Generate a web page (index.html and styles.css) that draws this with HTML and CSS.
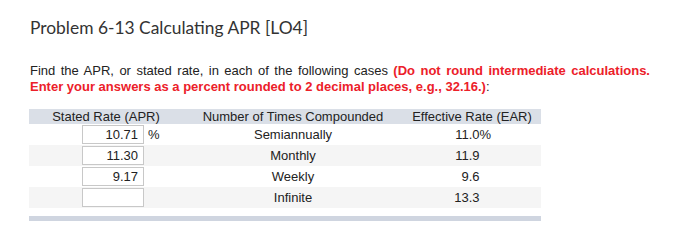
FILE: index.html
```html
<!DOCTYPE html>
<html>
<head>
<meta charset="utf-8">
<link rel="stylesheet" href="styles.css">
</head>
<body>
<div class="page">
  <h1 class="title">Problem 6-13 Calculating APR [LO4]</h1>
  <p class="intro">Find the APR, or stated rate, in each of the following cases <span class="red">(Do not round intermediate calculations. Enter your answers as a percent rounded to 2 decimal places, e.g., 32.16.)</span>:</p>
  <div class="table">
    <div class="row head">
      <div class="c1">Stated Rate (APR)</div>
      <div class="c2">Number of Times Compounded</div>
      <div class="c3">Effective Rate (EAR)</div>
    </div>
    <div class="row">
      <div class="c1 inputcell"><span class="box">10.71</span><span class="pct">%</span></div>
      <div class="c2">Semiannually</div>
      <div class="c3 val"><span class="num">11.0</span><span class="unit">%</span></div>
    </div>
    <div class="row alt">
      <div class="c1 inputcell"><span class="box">11.30</span></div>
      <div class="c2">Monthly</div>
      <div class="c3 val"><span class="num">11.9</span><span class="unit"></span></div>
    </div>
    <div class="row">
      <div class="c1 inputcell"><span class="box">9.17</span></div>
      <div class="c2">Weekly</div>
      <div class="c3 val"><span class="num">9.6</span><span class="unit"></span></div>
    </div>
    <div class="row alt">
      <div class="c1 inputcell"><span class="box"></span></div>
      <div class="c2">Infinite</div>
      <div class="c3 val"><span class="num">13.3</span><span class="unit"></span></div>
    </div>
    <div class="bar"></div>
  </div>
</div>
</body>
</html>
```
FILE: styles.css
```css
html, body {
  margin: 0;
  padding: 0;
  background: #fff;
}
.page {
  padding: 18px 0 0 30px;
  width: 620px;
}
.title {
  margin: 0;
  font-family: Lato, "Open Sans", sans-serif;
  font-weight: 400;
  font-size: 17.4px;
  line-height: 20px;
  color: #333;
}
.intro {
  margin: 25px 0 0 0;
  font-family: "Liberation Sans", Arial, sans-serif;
  font-size: 13px;
  line-height: 16px;
  color: #222;
  text-align: justify;
}
.red {
  color: #ec2029;
  font-weight: bold;
}
.table {
  margin: 14px 0 0 -1px;
  width: 512px;
  font-family: "Liberation Sans", Arial, sans-serif;
  font-size: 13px;
  color: #222;
}
.row {
  display: grid;
  grid-template-columns: 154px 220px 138px;
  height: 21px;
  align-items: center;
}
.row.head {
  height: 15px;
  background: #dadfe7;
  line-height: 15px;
}
.row.alt {
  background: #f5f5f5;
}
.c1, .c2, .c3 {
  text-align: center;
}
.inputcell {
  display: flex;
  align-items: center;
  height: 100%;
  padding-left: 53px;
}
.box {
  box-sizing: border-box;
  display: block;
  width: 62px;
  height: 19px;
  border: 1px solid #c8c8c8;
  background: #fff;
  text-align: right;
  padding-right: 5px;
  line-height: 17px;
}
.pct {
  margin-left: 4px;
}
.val {
  display: flex;
  justify-content: center;
}
.num {
  display: inline-block;
  width: 27px;
  text-align: right;
}
.unit {
  display: inline-block;
  width: 12px;
  text-align: left;
}
.bar {
  margin-top: 8px;
  height: 5px;
  background: #cfd5e0;
}
```
